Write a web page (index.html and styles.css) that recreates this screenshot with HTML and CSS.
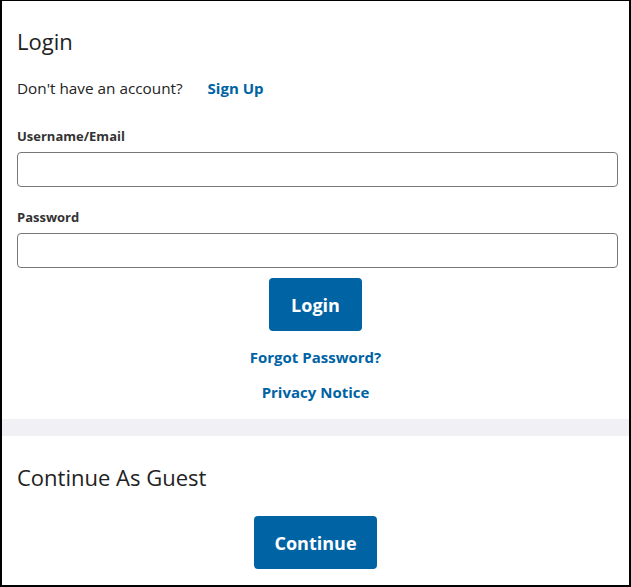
FILE: index.html
```html
<!DOCTYPE html>
<html lang="en">
<head>
    <meta charset="UTF-8">
    <meta name="viewport" content="width=device-width, initial-scale=1.0">
    <title>Login</title>
    <link rel="stylesheet" href="styles.css">
</head>
<body>
    <div class="frame">
        <section class="login">
            <h1>Login</h1>
            <div class="signup">
                <span>Don't have an account?</span>
                <a href="#">Sign Up</a>
            </div>
            <form>
                <label for="user">Username/Email</label>
                <input type="text" id="user">
                <label for="pass">Password</label>
                <input type="password" id="pass">
                <div class="actions">
                    <button type="button">Login</button>
                    <a href="#" class="forgot">Forgot Password?</a>
                    <a href="#" class="privacy">Privacy Notice</a>
                </div>
            </form>
        </section>
        <div class="band"></div>
        <section class="guest">
            <h2>Continue As Guest</h2>
            <div class="actions">
                <button type="button" class="wide">Continue</button>
            </div>
        </section>
    </div>
</body>
</html>
```

FILE: styles.css
```css
*{
    margin: 0px;
    padding: 0px;
    box-sizing: border-box;
}

body{
    font-family: "Open Sans", "Liberation Sans", sans-serif;
    color: #222;
    background-color: #fff;
}

.frame{
    width: 631px;
    height: 587px;
    border: #000 solid 1px;
    border-left-width: 2px;
    border-right-width: 2px;
    border-bottom-width: 2px;
    display: flex;
    flex-direction: column;
}

a{
    color: #0063a3;
    font-weight: bold;
    text-decoration: none;
}

h1, h2{
    font-size: 22px;
    font-weight: normal;
    line-height: 30px;
    color: #222;
}

/* 登入區 */
.login{
    padding: 25px 11px 16px 15px;
}

.signup{
    margin-top: 21px;
    font-size: 15.3px;
    line-height: 22px;
}

.signup a{
    margin-left: 21px;
    font-size: 15px;
}

form{
    display: flex;
    flex-direction: column;
    margin-top: 28px;
}

label{
    font-size: 13px;
    font-weight: bold;
    line-height: 18px;
    color: #333;
}

input{
    height: 35px;
    margin-top: 7px;
    border: #777 solid 1px;
    border-radius: 4px;
    padding: 0px 10px;
    font-size: 15px;
}

input + label{
    margin-top: 21px;
}

/* 按鈕與連結置中於整個框 */
.actions{
    display: flex;
    flex-direction: column;
    align-items: center;
    padding-right: 4px;
}

form .actions{
    margin-top: 10px;
}

button{
    background-color: #0063a3;
    color: #fff;
    font-family: inherit;
    font-size: 18px;
    font-weight: bold;
    height: 53px;
    width: 93px;
    border: 0px;
    border-radius: 4px;
    cursor: pointer;
}

button.wide{
    width: 123px;
}

.forgot, .privacy{
    font-size: 15px;
    line-height: 22px;
}

.forgot{
    margin-top: 15px;
}

.privacy{
    margin-top: 13px;
}

.band{
    height: 17px;
    background-color: #f1f1f5;
}

/* 訪客區 */
.guest{
    padding: 26px 11px 0px 15px;
}

.guest .actions{
    margin-top: 24px;
}
```
